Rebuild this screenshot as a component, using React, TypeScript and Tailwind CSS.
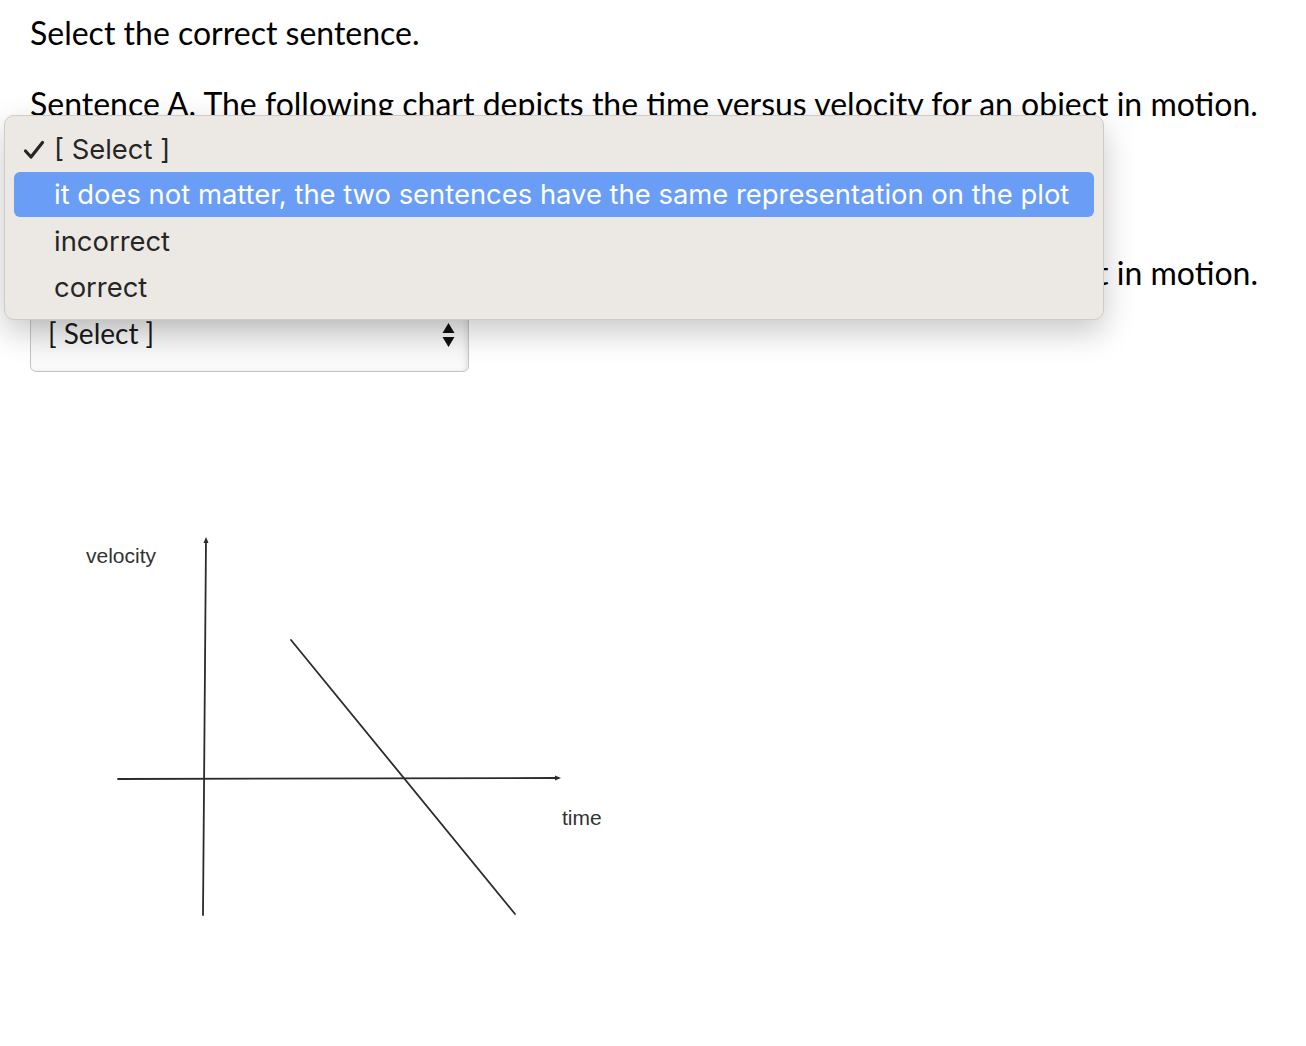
import React from "react";

const lato = { fontFamily: "Lato, 'Liberation Sans', sans-serif" };

function NativeSelect() {
  return (
    <div className="relative flex h-[72px] w-[439px] items-center rounded-[6px] border border-[#c4c4c4] bg-gradient-to-b from-[#e4e4e4] via-[#f6f6f6] to-[#fbfbfb] pb-[6px] pl-[17px] shadow-[inset_-3px_0_4px_rgba(0,0,0,0.08)]">
      <span className="text-[28px] leading-none text-[#1a1a1a]">[ Select ]</span>
      <svg className="absolute right-[13px] top-[21px]" width="13" height="26" viewBox="0 0 13 26">
        <polygon points="6.5,1 12.5,11 0.5,11" fill="#111" />
        <polygon points="0.5,15 12.5,15 6.5,25" fill="#111" />
      </svg>
    </div>
  );
}

export default function App() {
  const items = [
    { t: "[ Select ]", h: "h-[45px]" },
    { t: "it does not matter, the two sentences have the same representation on the plot", h: "h-[45px]" },
    { t: "incorrect", h: "h-[50px]" },
    { t: "correct", h: "h-[42px]" },
  ];
  return (
    <div className="relative min-h-[1046px] w-full overflow-hidden bg-white text-black" style={lato}>
      <div className="pl-[30px] pt-[13px] text-[32px]">
        <p className="leading-[40px]">Select the correct sentence.</p>
        <p className="mt-[31px] leading-[40px]">
          Sentence A. The following chart depicts the time versus velocity for an object in motion.
        </p>
        <div className="mt-[4px]">
          <NativeSelect />
        </div>
        <p className="mt-[53px] leading-[40px]">
          Sentence B. The following chart depicts the velocity versus time for an object in motion.
        </p>
        <div className="mt-[7px]">
          <NativeSelect />
        </div>
        <svg className="mt-[138px] block" width="620" height="420" viewBox="0 0 620 420">
          <g stroke="#2b2b2b" strokeWidth="1.8" fill="none" strokeLinecap="round">
            <line x1="176" y1="30" x2="173" y2="405" />
            <line x1="88" y1="269" x2="526" y2="268" />
            <line x1="261" y1="130" x2="485" y2="404" />
          </g>
          <polygon points="176,27 173.5,33 178.5,33" fill="#2b2b2b" />
          <polygon points="531,268 525,265.5 525,270.5" fill="#2b2b2b" />
          <text x="56" y="53" fontSize="21" fill="#333" style={{ fontFamily: "'Liberation Sans', Arial, sans-serif" }}>
            velocity
          </text>
          <text x="532" y="315" fontSize="21" fill="#333" style={{ fontFamily: "'Liberation Sans', Arial, sans-serif" }}>
            time
          </text>
        </svg>
      </div>

      <div
        className="absolute left-[4px] top-[115px] h-[205px] w-[1100px] rounded-[10px] border border-[#cfcbc6] bg-[#ece9e5] pt-[11px] shadow-[0_12px_32px_rgba(0,0,0,0.22)]"
        style={{ fontFamily: "Inter, 'Noto Sans', sans-serif" }}
      >
        {items.map((it, i) => (
          <div
            key={i}
            className={
              i === 1
                ? `relative mx-[9px] flex ${it.h} items-center rounded-[6px] bg-[#6a9df5] pl-[40px] text-[27.4px] text-white`
                : `relative mx-[9px] flex ${it.h} items-center pl-[40px] text-[27.4px] text-[#262626]`
            }
          >
            {i === 0 && (
              <svg className="absolute left-[9px] top-1/2 -translate-y-1/2" width="22" height="20" viewBox="0 0 22 20">
                <path d="M2.5 11 L8 17 L19.5 2.5" stroke="#262626" strokeWidth="3.2" fill="none" strokeLinecap="round" strokeLinejoin="round" />
              </svg>
            )}
            <span className="leading-none">{it.t}</span>
          </div>
        ))}
      </div>
    </div>
  );
}
